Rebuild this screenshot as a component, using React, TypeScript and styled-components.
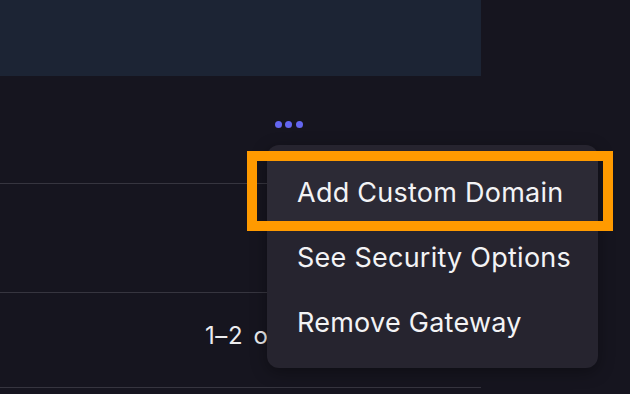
import React from "react";
import styled, { createGlobalStyle } from "styled-components";

const GlobalStyle = createGlobalStyle`
  html, body {
    margin: 0;
    padding: 0;
    background: #16151f;
    overflow: hidden;
  }
  body {
    font-family: Inter, "Noto Sans", sans-serif;
  }
`;

const Page = styled.div`
  position: relative;
  width: 630px;
  height: 394px;
  background: #16151f;
  overflow: hidden;
`;

const Column = styled.div`
  width: 481px;
  display: flex;
  flex-direction: column;
`;

const TopPanel = styled.div`
  height: 76px;
  background: #1c2434;
`;

const ActionRow = styled.div`
  height: 107px;
  display: flex;
  align-items: center;
  justify-content: flex-end;
  padding-right: 178px;
  padding-bottom: 11px;
  box-sizing: border-box;
`;

const DotsButton = styled.div`
  display: flex;
  gap: 3.7px;
`;

const Dot = styled.span`
  width: 7px;
  height: 7px;
  border-radius: 50%;
  background: #6466f0;
`;

const TableRow = styled.div<{ $h: number }>`
  height: ${(p) => p.$h}px;
  border-top: 1px solid #36353f;
  box-sizing: border-box;
`;

const Pagination = styled.div`
  height: 96px;
  border-top: 1px solid #36353f;
  border-bottom: 1px solid #36353f;
  box-sizing: border-box;
  padding-left: 205px;
  padding-top: 28px;
  color: #ececef;
  font-size: 24px;
  letter-spacing: 0.6px;
  word-spacing: 3px;
  white-space: nowrap;
`;

const Menu = styled.div`
  position: absolute;
  left: 267px;
  top: 145px;
  width: 331px;
  padding: 14px 0;
  box-sizing: border-box;
  background: #26242f;
  border-radius: 12px;
  box-shadow: 0 4px 16px rgba(0, 0, 0, 0.35);
`;

const MenuItem = styled.div<{ $active?: boolean }>`
  height: 65px;
  display: flex;
  align-items: center;
  padding-left: 30px;
  padding-top: 1px;
  box-sizing: border-box;
  background: ${(p) => (p.$active ? "#2c2a35" : "transparent")};
  color: #f3f3f5;
  font-size: 27px;
  letter-spacing: 0.25px;
`;

const Highlight = styled.div`
  position: absolute;
  left: 247px;
  top: 151px;
  width: 366px;
  height: 80px;
  border: 10px solid #ff9a00;
  box-sizing: border-box;
  pointer-events: none;
`;

export default function App() {
  return (
    <Page>
      <GlobalStyle />
      <Column>
        <TopPanel />
        <ActionRow>
          <DotsButton>
            <Dot />
            <Dot />
            <Dot />
          </DotsButton>
        </ActionRow>
        <TableRow $h={109} />
        <Pagination>1–2 of 2</Pagination>
      </Column>
      <Menu>
        <MenuItem $active>Add Custom Domain</MenuItem>
        <MenuItem>See Security Options</MenuItem>
        <MenuItem>Remove Gateway</MenuItem>
      </Menu>
      <Highlight />
    </Page>
  );
}
